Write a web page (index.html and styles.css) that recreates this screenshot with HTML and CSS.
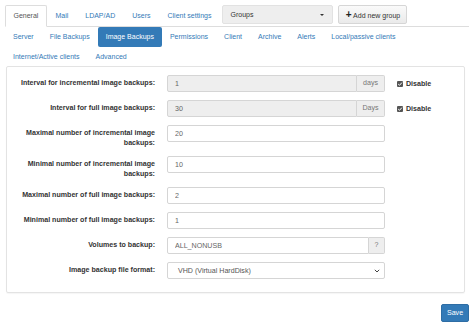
FILE: index.html
```html
<!DOCTYPE html>
<html>
<head>
    <meta charset="UTF-8">
    <title>Settings - Image Backups</title>
    <link rel="stylesheet" href="styles.css">
</head>
<body>
<div class="page">
    <div class="topbar">
        <ul class="tabs">
            <li class="active"><a>General</a></li>
            <li><a>Mail</a></li>
            <li><a>LDAP/AD</a></li>
            <li><a>Users</a></li>
            <li><a>Client settings</a></li>
        </ul>
        <div class="groupsel">
            <span>Groups</span>
            <span class="caret"></span>
        </div>
        <button class="btn" type="button"><span class="plus">+</span> Add new group</button>
    </div>

    <ul class="pills">
        <li><a>Server</a></li>
        <li><a>File Backups</a></li>
        <li class="active"><a>Image Backups</a></li>
        <li><a>Permissions</a></li>
        <li><a>Client</a></li>
        <li><a>Archive</a></li>
        <li><a>Alerts</a></li>
        <li><a>Local/passive clients</a></li>
        <li><a>Internet/Active clients</a></li>
        <li><a>Advanced</a></li>
    </ul>

    <div class="panel">
        <div class="form">
            <label>Interval for incremental image backups:</label>
            <div class="group">
                <input class="ctl" type="text" value="1" readonly>
                <span class="addon">days</span>
            </div>
            <div class="check"><span class="box"><svg viewBox="0 0 6 6" width="6" height="6"><path d="M1.2 3.1 L2.5 4.3 L4.9 1.6" fill="none" stroke="#fff" stroke-width="1"/></svg></span>Disable</div>

            <label>Interval for full image backups:</label>
            <div class="group">
                <input class="ctl" type="text" value="30" readonly>
                <span class="addon">Days</span>
            </div>
            <div class="check"><span class="box"><svg viewBox="0 0 6 6" width="6" height="6"><path d="M1.2 3.1 L2.5 4.3 L4.9 1.6" fill="none" stroke="#fff" stroke-width="1"/></svg></span>Disable</div>

            <label>Maximal number of incremental image backups:</label>
            <input class="ctl" type="text" value="20">
            <div></div>

            <label>Minimal number of incremental image backups:</label>
            <input class="ctl" type="text" value="10">
            <div></div>

            <label>Maximal number of full image backups:</label>
            <input class="ctl" type="text" value="2">
            <div></div>

            <label>Minimal number of full image backups:</label>
            <input class="ctl" type="text" value="1">
            <div></div>

            <label>Volumes to backup:</label>
            <div class="group">
                <input class="ctl white" type="text" value="ALL_NONUSB">
                <span class="addon small">?</span>
            </div>
            <div></div>

            <label>Image backup file format:</label>
            <div class="select">
                <span>VHD (Virtual HardDisk)</span>
                <svg viewBox="0 0 6 4" width="6" height="4"><path d="M0.8 0.8 L3 3 L5.2 0.8" fill="none" stroke="#444" stroke-width="1"/></svg>
            </div>
            <div></div>
        </div>
    </div>

    <div class="actions">
        <button class="save" type="button">Save</button>
    </div>
</div>
</body>
</html>
```

FILE: styles.css
```css
* {box-sizing: border-box;}
body {margin: 0; background: #fff; font-family: "Liberation Sans", Arial, sans-serif; font-size: 7.1px; color: #333;}
.page {padding: 5px 5px 0 5px;}
ul {list-style: none; margin: 0; padding: 0;}
a {color: #337ab7; text-decoration: none; display: block; white-space: nowrap;}

/* top tabs row */
.topbar {display: flex; align-items: flex-start; height: 22px; border-bottom: 1px solid #ddd; font-size: 7px;}
.tabs {display: flex;}
.tabs a {padding: 0 7.5px; line-height: 20px; border: 1px solid transparent; border-radius: 2px 2px 0 0;}
.tabs li.active a {color: #555; background: #fff; border-color: #ddd; border-bottom-color: #fff;}
.groupsel {margin-left: 2.5px; width: 111px; height: 19px; padding: 0 7px; display: flex; align-items: center; justify-content: space-between; background: #eee; border: 1px solid #e2e2e2; border-radius: 2px; color: #333;}
.caret {width: 0; height: 0; border-left: 2px solid transparent; border-right: 2px solid transparent; border-top: 2.5px solid #333; margin-right: 1px;}
.btn {margin-left: 5px; width: 69px; height: 19px; padding: 0; font: inherit; color: #333; background: linear-gradient(#fafafa, #eaeaea); border: 1px solid #d6d6d6; border-radius: 2px;}
.plus {font-weight: bold; font-size: 10px; line-height: 7px; color: #222;}

/* pills */
.pills {display: flex; flex-wrap: wrap; width: 464px; font-size: 7px;}
.pills a {padding: 0 8px; line-height: 19.5px; border-radius: 2px;}
.pills li.active a {background: #337ab7; color: #fff;}

/* panel */
.panel {margin: 0 4px 0 1px; border: 1px solid #e3e3e3; border-radius: 2px; box-shadow: 0 1px 1px rgba(0,0,0,0.04); padding: 8px 0 13px 7px;}
.form {display: grid; grid-template-columns: 141px 218px auto; column-gap: 12px; row-gap: 8px;}
.form label {text-align: right; font-weight: bold; padding-top: 3px; line-height: 10px; color: #333;}
.ctl {height: 17px; width: 100%; margin: 0; padding: 0 7px; font: inherit; color: #666; background: #fff; border: 1px solid #d5d5d5; border-radius: 2px; outline: none;}
.ctl[readonly] {background: #eee;}
.group {display: flex;}
.group .ctl {flex: 1; border-radius: 2px 0 0 2px;}
.addon {width: 28px; height: 17px; line-height: 15px; text-align: center; color: #777; background: #eee; border: 1px solid #d5d5d5; border-left: 0; border-radius: 0 2px 2px 0;}
.addon.small {width: 16px;}
.check {display: flex; align-items: center; height: 17px; font-weight: bold; color: #333;}
.box {width: 6px; height: 6px; margin-right: 3px; background: #555; border-radius: 1px; display: flex;}
.select {height: 17px; display: flex; align-items: center; justify-content: space-between; padding: 0 4px 0 10px; color: #555; background: #fff; border: 1px solid #d5d5d5; border-radius: 2px;}

/* save */
.actions {display: flex; justify-content: flex-end; margin-top: 10.5px;}
.save {width: 28px; height: 18px; padding: 0; font: inherit; color: #fff; background: #337ab7; border: 1px solid #2e6da4; border-radius: 2px;}
```
